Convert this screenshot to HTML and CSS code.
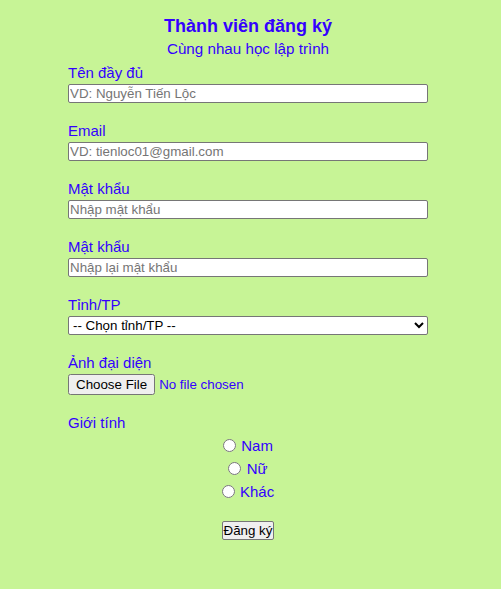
FILE: index.html
```html
<!DOCTYPE html>
<html lang="vi">

<head>
    <meta charset="UTF-8">
    <meta name="viewport" content="width=device-width, initial-scale=1.0">
    <title>Thành viên đăng ký</title>
    <link rel="stylesheet" href="styles.css">
</head>

<body>
    <form class="register-form">
        <h2 class="form-title">Thành viên đăng ký</h2>
        <p class="form-subtitle">Cùng nhau học lập trình</p>

        <div class="field">
            <label class="field-label" for="fullname">Tên đầy đủ</label>
            <input type="text" class="field-input" id="fullname" placeholder="VD: Nguyễn Tiến Lộc">
        </div>

        <div class="field">
            <label class="field-label" for="email">Email</label>
            <input type="email" class="field-input" id="email" placeholder="VD: tienloc01@gmail.com">
        </div>

        <div class="field">
            <label class="field-label" for="password">Mật khẩu</label>
            <input type="password" class="field-input" id="password" placeholder="Nhập mật khẩu">
        </div>

        <div class="field">
            <label class="field-label" for="password-confirm">Mật khẩu</label>
            <input type="password" class="field-input" id="password-confirm" placeholder="Nhập lại mật khẩu">
        </div>

        <div class="field">
            <label class="field-label" for="province">Tỉnh/TP</label>
            <select class="field-input field-select" id="province">
                <option value="">-- Chọn tỉnh/TP --</option>
                <option value="hn">Hà Nội</option>
                <option value="hcm">TP Hồ Chí Minh</option>
                <option value="dn">Đà Nẵng</option>
            </select>
        </div>

        <div class="field">
            <label class="field-label" for="avatar">Ảnh đại diện</label>
            <input type="file" class="file-input" id="avatar">
        </div>

        <div class="field field-gender">
            <span class="field-label">Giới tính</span>
            <div class="gender-list">
                <label class="gender-item"><input type="radio" name="gender" value="male"> Nam</label>
                <label class="gender-item"><input type="radio" name="gender" value="female"> Nữ</label>
                <label class="gender-item"><input type="radio" name="gender" value="other"> Khác</label>
            </div>
        </div>

        <div class="form-actions">
            <button type="submit" class="submit-button">Đăng ký</button>
        </div>
    </form>
</body>
</html>
```

FILE: styles.css
```css
body {
    font-family: "Liberation Sans", Arial, sans-serif;
    background-color: #c7f496;
    color: #3300ff;
    margin: 0;
    padding: 15px 5px 20px 0;
}

.register-form {
    width: 360px;
    margin: 0 auto;
}

.form-title {
    font-size: 18px;
    line-height: 22px;
    font-weight: bold;
    text-align: center;
    margin: 0;
}

.form-subtitle {
    font-size: 15.2px;
    line-height: 18px;
    text-align: center;
    margin: 3px 0 6px;
}

.field {
    margin-bottom: 19px;
}

.field-gender {
    margin-bottom: 18px;
}

.field-label {
    display: block;
    font-size: 15px;
    line-height: 18px;
    margin-bottom: 2px;
}

.field-input {
    display: block;
    box-sizing: border-box;
    width: 360px;
    height: 19px;
    margin: 0;
    padding: 0 1px;
    border: 1px solid #767676;
    border-radius: 2px;
    background-color: #fff;
    font-family: "Liberation Sans", Arial, sans-serif;
    font-size: 13.33px;
}

.field-select {
    color: #000;
    padding: 0;
}

.file-input {
    display: block;
    height: 21px;
    margin: 0;
    color: #3300ff;
    font-family: "Liberation Sans", Arial, sans-serif;
    font-size: 13.33px;
}

.gender-list {
    display: flex;
    flex-direction: column;
    align-items: center;
}

.gender-item {
    font-size: 15px;
    line-height: 23px;
}

.gender-item input {
    margin: 0 1px 0 0;
    vertical-align: -1px;
}

.form-actions {
    text-align: center;
}

.submit-button {
    font-family: "Liberation Sans", Arial, sans-serif;
    font-size: 13.33px;
    height: 19px;
    padding: 0 1px;
    border: 1px solid #767676;
    border-radius: 2px;
    background-color: #efefef;
    color: #000;
}
```
